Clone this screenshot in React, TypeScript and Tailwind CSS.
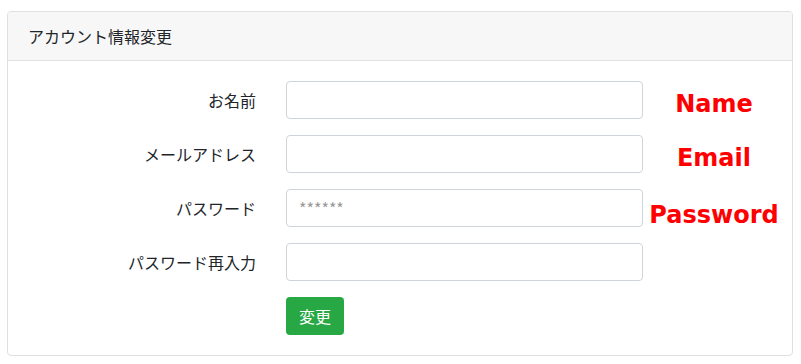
import React from "react";

const jp = { fontFamily: '"Noto Sans CJK JP", "Noto Sans", sans-serif' };

function Row({ label, placeholder, note, noteClass }: { label: string; placeholder?: string; note?: string; noteClass?: string }) {
  return (
    <div className="flex items-center h-[38px] mb-4">
      <label className="w-[228px] shrink-0 text-right text-[16px] leading-6 text-[#212529]">{label}</label>
      <input
        className="ml-[30px] w-[357px] shrink-0 h-[38px] border border-[#ced4da] rounded-[4px] px-3 text-[16px] bg-white placeholder:text-[#999] outline-none"
        placeholder={placeholder}
        style={jp}
      />
      <div className={"w-[142px] shrink-0 text-center text-[24px] font-bold text-[#f00] " + (noteClass ?? "")} style={{ fontFamily: '"DejaVu Sans", sans-serif' }}>
        {note}
      </div>
    </div>
  );
}

export default function App() {
  return (
    <div className="w-[801px] h-[364px] bg-white pt-[11px] pl-[7px]" style={jp}>
      <div className="w-[786px] h-[345px] border border-[#dfdfdf] rounded-[4px] overflow-hidden">
        <div className="h-[49px] bg-[#f7f7f7] border-b border-[#dfdfdf] px-5 py-3 text-[16px] leading-6 text-[#212529]">
          アカウント情報変更
        </div>
        <div className="p-5">
          <Row label="お名前" note="Name" noteClass="mt-2" />
          <Row label="メールアドレス" note="Email" noteClass="mt-2" />
          <Row label="パスワード" placeholder="******" note="Password" noteClass="mt-[14px]" />
          <Row label="パスワード再入力" />
          <div className="flex">
            <div className="w-[258px] shrink-0" />
            <button className="w-[58px] h-[38px] flex items-center justify-center bg-[#28a745] rounded-[4px] text-white text-[16px] leading-6">変更</button>
          </div>
        </div>
      </div>
    </div>
  );
}
